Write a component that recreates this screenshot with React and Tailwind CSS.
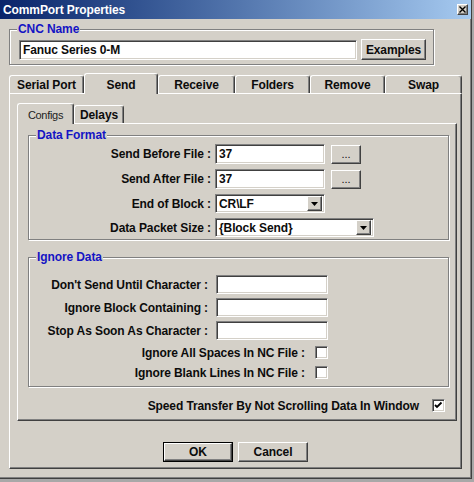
import React from 'react'

// classic 3D edges
const raised =
  'border border-t-white border-l-white border-r-[#404040] border-b-[#404040] shadow-[inset_-1px_-1px_0_#808080]'
const sunken =
  'border border-t-[#808080] border-l-[#808080] border-r-white border-b-white shadow-[inset_1px_1px_0_#404040,inset_-1px_-1px_0_#d4d0c8] bg-white'

function Group({ title, className = '', children }) {
  return (
    <div className={`relative border border-[#808080] shadow-[inset_1px_1px_0_#fff,1px_1px_0_#fff] ${className}`}>
      <span className="absolute top-[-8px] left-[7px] bg-[#d4d0c8] px-[1px] font-bold text-[#1414c4] leading-[14px]">
        {title}
      </span>
      {children}
    </div>
  )
}

function Button({ className = '', children }) {
  return (
    <button className={`${raised} bg-[#d4d0c8] font-bold flex items-center justify-center ${className}`}>
      {children}
    </button>
  )
}

function Field({ value = '', className = '' }) {
  return <div className={`${sunken} flex items-center pl-[3px] font-bold ${className}`}>{value}</div>
}

function Select({ value, className = '' }) {
  return (
    <div className={`${sunken} flex items-center pl-[3px] pr-[2px] font-bold ${className}`}>
      <span className="flex-1">{value}</span>
      <span className={`${raised} bg-[#d4d0c8] w-[15px] h-[15px] flex items-center justify-center`}>
        <svg width="7" height="4" viewBox="0 0 7 4">
          <path d="M0 0h7L3.5 4z" fill="#000" />
        </svg>
      </span>
    </div>
  )
}

function Check({ checked }) {
  return (
    <span className={`${sunken} block w-[13px] h-[13px]`}>
      {checked && (
        <svg width="11" height="11" viewBox="0 0 11 11">
          <path d="M2 5l2 2 4.5-4.5" fill="none" stroke="#000" strokeWidth="1.8" />
        </svg>
      )}
    </span>
  )
}

function Tab({ label, width, active, bold = true }) {
  const size = active ? 'h-[21px] -mb-px relative z-10 pt-[1px]' : 'h-[18px]'
  return (
    <div
      className={`${size} ${width} bg-[#d4d0c8] border-t border-l border-r border-t-white border-l-white border-r-[#404040] rounded-t-[3px] shadow-[inset_-1px_0_0_#808080] flex items-center justify-center ${bold ? 'font-bold' : 'text-[11px] tracking-[-0.3px] text-[#222]'}`}
    >
      {label}
    </div>
  )
}

const tabs = [
  { label: 'Serial Port', width: 'w-[75px]' },
  { label: 'Send', width: 'w-[74px]', active: true },
  { label: 'Receive', width: 'w-[77px]' },
  { label: 'Folders', width: 'w-[75px]' },
  { label: 'Remove', width: 'w-[75px]' },
  { label: 'Swap', width: 'w-[77px]' },
]

function FormatRow({ label, children }) {
  return (
    <div className="flex items-center">
      <span className="w-[182px] text-right font-bold">{label}</span>
      <div className="ml-[4px] flex items-center gap-[6px]">{children}</div>
    </div>
  )
}

function IgnoreRow({ label, children, gap = 'gap-[8px]', h = 'h-[19px]' }) {
  return (
    <div className={`flex items-center ${gap} ${h}`}>
      <span className="font-bold">{label}</span>
      {children}
    </div>
  )
}

export default function App() {
  return (
    <div className="w-[474px] h-[482px] bg-[#a8a8a8] [font-family:'Liberation_Sans',Arial,sans-serif] text-[12px] leading-[14px] tracking-[-0.1px] text-[#0c0c0c]">
      <div className="w-[472px] h-[479px] bg-[#d4d0c8] border-r border-b border-r-[#404040] border-b-[#404040] shadow-[inset_-1px_-1px_0_#808080]">
        {/* title bar */}
        <div className="h-[19px] bg-gradient-to-r from-[#0a246a] to-[#a6caf0] flex items-center justify-between pl-[3px] pr-[3px]">
          <span className="font-bold text-white">CommPort Properties</span>
          <span className={`${raised} bg-[#d4d0c8] w-[11px] h-[11px] flex items-center justify-center`}>
            <svg width="7" height="7" viewBox="0 0 7 7">
              <path d="M0.5 0.5l6 6M6.5 0.5l-6 6" stroke="#000" strokeWidth="1.4" />
            </svg>
          </span>
        </div>

        <Group title="CNC Name" className="mt-[10px] ml-[9px] w-[425px] h-[36px] flex items-start gap-[4px] pt-[9px] pl-[9px]">
          <Field value="Fanuc Series 0-M" className="w-[338px] h-[20px] mt-[1px]" />
          <Button className="w-[65px] h-[21px]">Examples</Button>
        </Group>

        <div className="mt-[8px] ml-[9px] w-[453px]">
          <div className="flex items-end h-[20px]">
            {tabs.map((t) => (
              <Tab key={t.label} {...t} />
            ))}
          </div>

          <div className={`${raised} h-[376px]`}>
            <div className="pt-[9px] pl-[7px]">
              <div className="flex items-end h-[20px]">
                <Tab label="Configs" width="w-[57px]" active bold={false} />
                <Tab label="Delays" width="w-[50px]" />
              </div>

              <div className={`${raised} w-[440px] h-[298px]`}>
                <Group title="Data Format" className="mt-[11px] ml-[10px] w-[421px] h-[105px] pt-[8px] flex flex-col gap-[5px]">
                  <FormatRow label="Send Before File :">
                    <Field value="37" className="w-[110px] h-[20px]" />
                    <Button className="w-[30px] h-[19px] !font-normal text-[11px] items-end pb-[2px]">...</Button>
                  </FormatRow>
                  <FormatRow label="Send After File :">
                    <Field value="37" className="w-[110px] h-[20px]" />
                    <Button className="w-[30px] h-[19px] !font-normal text-[11px] items-end pb-[2px]">...</Button>
                  </FormatRow>
                  <FormatRow label="End of Block :">
                    <Select value="CR\LF" className="w-[110px] h-[19px]" />
                  </FormatRow>
                  <FormatRow label="Data Packet Size :">
                    <Select value="{Block Send}" className="w-[159px] h-[19px]" />
                  </FormatRow>
                </Group>

                <Group title="Ignore Data" className="mt-[17px] ml-[10px] w-[421px] h-[130px] pt-[17px]">
                  <div className="w-[299px] flex flex-col items-end">
                    <IgnoreRow label="Don't Send Until Character :">
                      <Field className="w-[112px] h-[19px]" />
                    </IgnoreRow>
                    <div className="h-[4px]" />
                    <IgnoreRow label="Ignore Block Containing :">
                      <Field className="w-[112px] h-[19px]" />
                    </IgnoreRow>
                    <div className="h-[4px]" />
                    <IgnoreRow label="Stop As Soon As Character :">
                      <Field className="w-[112px] h-[19px]" />
                    </IgnoreRow>
                    <div className="h-[6px]" />
                    <IgnoreRow label="Ignore All Spaces In NC File :" gap="gap-[10px]" h="h-[13px]">
                      <Check />
                    </IgnoreRow>
                    <div className="h-[7px]" />
                    <IgnoreRow label="Ignore Blank Lines In NC File :" gap="gap-[10px]" h="h-[13px]">
                      <Check />
                    </IgnoreRow>
                  </div>
                </Group>

                <div className="mt-[12px] h-[13px] flex items-center justify-end gap-[13px] pr-[11px]">
                  <span className="font-bold">Speed Transfer By Not Scrolling Data In Window</span>
                  <Check checked />
                </div>
              </div>
            </div>

            <div className="mt-[21px] flex justify-center gap-[5px]">
              <div className="border border-[#000]">
                <Button className="w-[68px] h-[18px]">OK</Button>
              </div>
              <Button className="w-[70px] h-[20px]">Cancel</Button>
            </div>
          </div>
        </div>
      </div>
    </div>
  )
}
